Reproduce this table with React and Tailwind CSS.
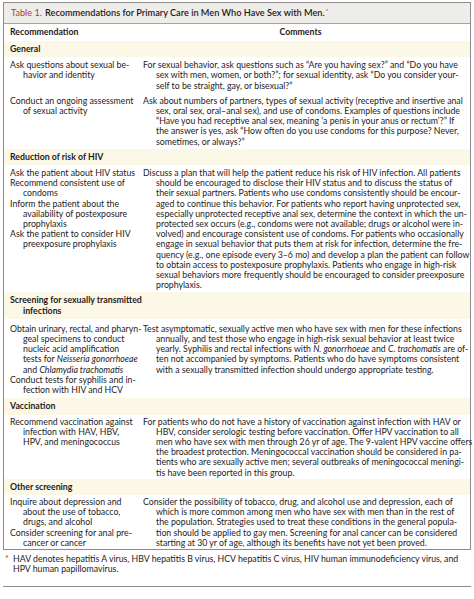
import React from "react";

const sections = [
  {
    title: ["General"],
    rows: [
      {
        left: [["Ask questions about sexual be-", "havior and identity"]],
        right: [
          "For sexual behavior, ask questions such as “Are you having sex?” and “Do you have",
          "sex with men, women, or both?”; for sexual identity, ask “Do you consider your-",
          "self to be straight, gay, or bisexual?”",
        ],
      },
      {
        left: [["Conduct an ongoing assessment", "of sexual activity"]],
        right: [
          "Ask about numbers of partners, types of sexual activity (receptive and insertive anal",
          "sex, oral sex, oral–anal sex), and use of condoms. Examples of questions include",
          "“Have you had receptive anal sex, meaning ‘a penis in your anus or rectum’?” If",
          "the answer is yes, ask “How often do you use condoms for this purpose? Never,",
          "sometimes, or always?”",
        ],
      },
    ],
  },
  {
    title: ["Reduction of risk of HIV"],
    rows: [
      {
        left: [
          ["Ask the patient about HIV status"],
          ["Recommend consistent use of", "condoms"],
          ["Inform the patient about the", "availability of postexposure", "prophylaxis"],
          ["Ask the patient to consider HIV", "preexposure prophylaxis"],
        ],
        right: [
          "Discuss a plan that will help the patient reduce his risk of HIV infection. All patients",
          "should be encouraged to disclose their HIV status and to discuss the status of",
          "their sexual partners. Patients who use condoms consistently should be encour-",
          "aged to continue this behavior. For patients who report having unprotected sex,",
          "especially unprotected receptive anal sex, determine the context in which the un-",
          "protected sex occurs (e.g., condoms were not available; drugs or alcohol were in-",
          "volved) and encourage consistent use of condoms. For patients who occasionally",
          "engage in sexual behavior that puts them at risk for infection, determine the fre-",
          "quency (e.g., one episode every 3–6 mo) and develop a plan the patient can follow",
          "to obtain access to postexposure prophylaxis. Patients who engage in high-risk",
          "sexual behaviors more frequently should be encouraged to consider preexposure",
          "prophylaxis.",
        ],
      },
    ],
  },
  {
    title: ["Screening for sexually transmitted", "infections"],
    rows: [
      {
        pad: "pt-[5px] pb-[3px]",
        left: [
          [
            "Obtain urinary, rectal, and pharyn-",
            "geal specimens to conduct",
            "nucleic acid amplification",
            <>
              tests for <i>Neisseria gonorrhoeae</i>
            </>,
            <>
              and <i>Chlamydia trachomatis</i>
            </>,
          ],
          ["Conduct tests for syphilis and in-", "fection with HIV and HCV"],
        ],
        right: [
          "Test asymptomatic, sexually active men who have sex with men for these infections",
          "annually, and test those who engage in high-risk sexual behavior at least twice",
          <>
            yearly. Syphilis and rectal infections with <i>N. gonorrhoeae</i> and{" "}
            <i>C. trachomatis</i> are of-
          </>,
          "ten not accompanied by symptoms. Patients who do have symptoms consistent",
          "with a sexually transmitted infection should undergo appropriate testing.",
        ],
      },
    ],
  },
  {
    title: ["Vaccination"],
    rows: [
      {
        pad: "pt-[2px] pb-[1px]",
        left: [
          [
            "Recommend vaccination against",
            "infection with HAV, HBV,",
            "HPV, and meningococcus",
          ],
        ],
        right: [
          "For patients who do not have a history of vaccination against infection with HAV or",
          "HBV, consider serologic testing before vaccination. Offer HPV vaccination to all",
          "men who have sex with men through 26 yr of age. The 9-valent HPV vaccine offers",
          "the broadest protection. Meningococcal vaccination should be considered in pa-",
          "tients who are sexually active men; several outbreaks of meningococcal meningi-",
          "tis have been reported in this group.",
        ],
      },
    ],
  },
  {
    title: ["Other screening"],
    rows: [
      {
        pad: "pt-[2px] pb-[1px]",
        left: [
          ["Inquire about depression and", "about the use of tobacco,", "drugs, and alcohol"],
          ["Consider screening for anal pre-", "cancer or cancer"],
        ],
        right: [
          "Consider the possibility of tobacco, drug, and alcohol use and depression, each of",
          "which is more common among men who have sex with men than in the rest of",
          "the population. Strategies used to treat these conditions in the general popula-",
          "tion should be applied to gay men. Screening for anal cancer can be considered",
          "starting at 30 yr of age, although its benefits have not yet been proved.",
        ],
      },
    ],
  },
];

function Lines({ lines }) {
  return (
    <div className="pl-[13px] -indent-[13px] whitespace-nowrap">
      {lines.map((line, i) => (
        <React.Fragment key={i}>
          {i > 0 && <br />}
          {line}
        </React.Fragment>
      ))}
    </div>
  );
}

export default function App() {
  return (
    <div
      className="w-[474px] h-[599px] bg-white px-[3px] pt-[2px] text-[#1e1b1c] text-[8.75px] leading-[10.2px]"
      style={{ fontFamily: "Lato, 'Open Sans', sans-serif" }}
    >
      <div className="border border-[#8d8d8d]">
        <div className="h-[21px] bg-[#efedea] border-b border-[#a3a3a3] flex items-center pl-[7px] text-[9.2px] font-semibold">
          <span className="text-[#b83a32] font-normal">Table 1.</span>
          <span className="ml-[3px]">Recommendations for Primary Care in Men Who Have Sex with Men.</span>
          <span className="text-[#b83a32] text-[6px] -mt-[4px] ml-[1px]">*</span>
        </div>
        <div className="grid grid-cols-[133px_minmax(0,1fr)] h-[17px] items-center pl-[6px] font-bold">
          <div>Recommendation</div>
          <div className="text-center pr-[12px]">Comments</div>
        </div>
        {sections.map((s, si) => (
          <div key={si}>
            <div className="bg-[#fcf8e7] py-[3px] pl-[6px] font-bold">
              <Lines lines={s.title} />
            </div>
            {s.rows.map((r, ri) => (
              <div
                key={ri}
                className={`grid grid-cols-[133px_minmax(0,1fr)] pl-[6px] ${r.pad || "pt-[3px] pb-[2px]"}`}
              >
                <div className="min-w-0">
                  {r.left.map((l, li) => (
                    <Lines key={li} lines={l} />
                  ))}
                </div>
                <div className="min-w-0">
                  <Lines lines={r.right} />
                </div>
              </div>
            ))}
          </div>
        ))}
      </div>
      <div className="mt-[4px] pl-[2px] leading-[10.5px]">
        <div className="flex">
          <span className="w-[8px] text-[#b83a32]">*</span>
          <div className="whitespace-nowrap">
            HAV denotes hepatitis A virus, HBV hepatitis B virus, HCV hepatitis C virus, HIV human immunodeficiency virus, and
            <br />
            HPV human papillomavirus.
          </div>
        </div>
      </div>
      <div className="mt-[11px] border-t border-[#8d8d8d]" />
    </div>
  );
}
